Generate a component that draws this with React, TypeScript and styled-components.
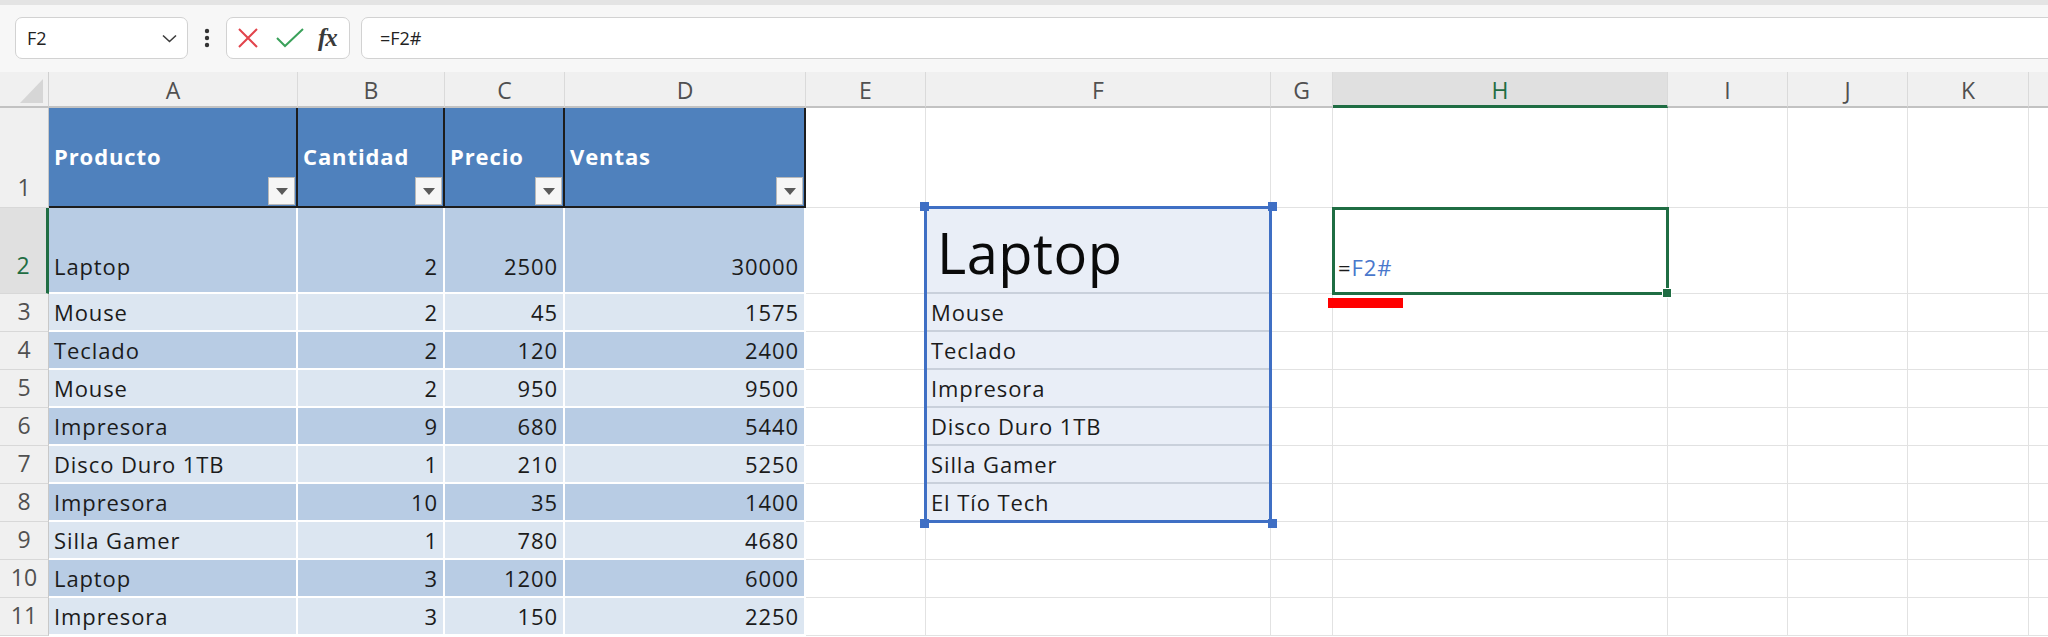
import React from "react";
import styled, { createGlobalStyle } from "styled-components";

const GlobalStyle = createGlobalStyle`
  html, body { margin: 0; padding: 0; background: #fff; }
  body { font-family: "Open Sans", "Noto Sans", sans-serif; }
`;

const Window = styled.div`
  width: 2048px;
  height: 637px;
  overflow: hidden;
  background: #fff;
  display: flex;
  flex-direction: column;
`;

/* ---------- formula bar ---------- */
const FormulaBar = styled.div`
  flex: 0 0 72px;
  box-sizing: border-box;
  border-top: 5px solid #e4e4e4;
  background: #f7f7f7;
  display: flex;
  align-items: flex-start;
  padding: 12px 0 0 15px;
`;

const Box = styled.div`
  box-sizing: border-box;
  height: 42px;
  background: #fff;
  border: 1px solid #d2d2d2;
  border-radius: 7px;
  display: flex;
  align-items: center;
`;

const NameBox = styled(Box)`
  width: 173px;
  justify-content: space-between;
  padding: 0 10px 0 11px;
  font-size: 18px;
  color: #222;
`;

const MoreDots = styled.div`
  width: 38px;
  height: 42px;
  display: flex;
  align-items: center;
  justify-content: center;
`;

const FuncBox = styled(Box)`
  width: 124px;
  padding-left: 10px;
  gap: 17px;
`;

const Fx = styled.span`
  font-family: "Liberation Serif", "DejaVu Serif", serif;
  font-style: italic;
  font-weight: 700;
  font-size: 25px;
  color: #3a3a3a;
  margin-left: -3px;
  letter-spacing: -1px;
`;

const FormulaInput = styled(Box)`
  flex: 1;
  margin-left: 11px;
  margin-right: -12px;
  padding-left: 18px;
  font-size: 18px;
  color: #222;
`;

/* ---------- sheet ---------- */
const Sheet = styled.div`
  flex: 1;
  display: grid;
  grid-template-columns: 49px 249px 147px 120px 241px 120px 345px 62px 335px 120px 120px 121px 120px;
  grid-template-rows: 36px 100px 86px repeat(9, 38px);
  font-size: 22px;
  color: #1b1b1b;
`;

const Corner = styled.div`
  position: relative;
  background: #f0f0f0;
  border-right: 1px solid #d0d0d0;
  border-bottom: 2px solid #c2c2c2;
  &::after {
    content: "";
    position: absolute;
    right: 5px;
    bottom: 3px;
    width: 23px;
    height: 24px;
    background: #d6d6d6;
    clip-path: polygon(100% 0, 100% 100%, 0 100%);
  }
`;

const ColHead = styled.div<{ $active?: boolean }>`
  display: flex;
  align-items: center;
  justify-content: center;
  font-size: 23px;
  color: ${(p) => (p.$active ? "#1f6d43" : "#505050")};
  background: ${(p) => (p.$active ? "#e0e0e0" : "#f0f0f0")};
  border-right: 1px solid #dadada;
  border-bottom: ${(p) => (p.$active ? "3px solid #1f6d43" : "2px solid #c2c2c2")};
  padding-top: 2px;
`;

const RowHead = styled.div<{ $active?: boolean }>`
  display: flex;
  align-items: flex-end;
  justify-content: center;
  padding-bottom: ${(p) => (p.$active ? 12 : 4)}px;
  font-size: 23px;
  color: ${(p) => (p.$active ? "#1f6d43" : "#505050")};
  background: ${(p) => (p.$active ? "#e0e0e0" : "#f0f0f0")};
  border-right: ${(p) => (p.$active ? "3px solid #1f6d43" : "1px solid #c8c8c8")};
  border-bottom: 1px solid #d8d8d8;
`;

const HeadCell = styled.div`
  position: relative;
  display: flex;
  align-items: center;
  padding: 0 0 2px 5px;
  background: #4f81bd;
  color: #fff;
  font-weight: 700;
  letter-spacing: 0.9px;
  border-right: 2px solid #1d1d1d;
  border-bottom: 2px solid #1d1d1d;
`;

const FilterButton = styled.span`
  position: absolute;
  right: 1px;
  bottom: 1px;
  width: 27px;
  height: 28px;
  box-sizing: border-box;
  background: #f6f6f6;
  border: 1px solid #b9b9b9;
  display: flex;
  align-items: center;
  justify-content: center;
`;

type Band = "dark" | "light" | undefined;

const Cell = styled.div<{ $band?: Band; $num?: boolean; $tall?: boolean }>`
  display: flex;
  align-items: flex-end;
  justify-content: ${(p) => (p.$num ? "flex-end" : "flex-start")};
  padding: 0 ${(p) => (p.$num ? 5 : 0)}px ${(p) => (p.$tall ? 11 : 3)}px ${(p) => (p.$num ? 0 : 5)}px;
  background: ${(p) =>
    p.$band === "dark" ? "#b8cce4" : p.$band === "light" ? "#dce6f1" : "#fff"};
  border-right: ${(p) => (p.$band ? "2px solid #fff" : "1px solid #e2e2e2")};
  border-bottom: ${(p) => (p.$band ? "2px solid #fff" : "1px solid #e2e2e2")};
  letter-spacing: 0.9px;
  white-space: nowrap;
  min-width: 0;
`;

const ActiveCell = styled(Cell)`
  position: relative;
  &::after {
    content: "";
    position: absolute;
    inset: -1px -2px -2px -1px;
    border: 3px solid #1f6d43;
    pointer-events: none;
  }
`;

const Ref = styled.span`
  color: #4a78cc;
`;

const FillHandle = styled.span`
  position: absolute;
  right: -5px;
  bottom: -5px;
  width: 8px;
  height: 8px;
  background: #1f6d43;
  border: 1px solid #fff;
  z-index: 2;
`;

const RedMark = styled.span`
  position: absolute;
  left: -5px;
  top: calc(100% + 5px);
  width: 75px;
  height: 10px;
  background: #ff0000;
  z-index: 2;
`;

const Spill = styled.div`
  grid-column: 7;
  grid-row: 3 / span 7;
  position: relative;
  display: flex;
  flex-direction: column;
  background: #e9eef7;
  &::after {
    content: "";
    position: absolute;
    inset: -2px -1px -1px -2px;
    border: 3px solid #3f6fc4;
    pointer-events: none;
  }
`;

const SpillCell = styled.div<{ $big?: boolean }>`
  flex: 0 0 ${(p) => (p.$big ? 86 : 38)}px;
  box-sizing: border-box;
  display: flex;
  align-items: flex-end;
  padding: 0 0 ${(p) => (p.$big ? 3 : 3)}px ${(p) => (p.$big ? 11 : 5)}px;
  font-size: ${(p) => (p.$big ? 56 : 22)}px;
  line-height: 1.3;
  letter-spacing: ${(p) => (p.$big ? 0.5 : 0.9)}px;
  color: ${(p) => (p.$big ? "#0a0a0a" : "inherit")};
  border-bottom: 2px solid #c9d0db;
  &:last-child { border-bottom: none; }
`;

const Handle = styled.span<{ $x: "left" | "right"; $y: "top" | "bottom" }>`
  position: absolute;
  ${(p) => p.$x}: -6px;
  ${(p) => p.$y}: -6px;
  width: 9px;
  height: 9px;
  background: #3f6fc4;
  z-index: 3;
`;

/* ---------- icons ---------- */
const Chevron = () => (
  <svg width="15" height="9" viewBox="0 0 15 9">
    <path d="M1 1.5 L7.5 7.5 L14 1.5" fill="none" stroke="#3c3c3c" strokeWidth="1.6" />
  </svg>
);

const Dots = () => (
  <svg width="6" height="20" viewBox="0 0 6 20">
    <circle cx="3" cy="3" r="2.2" fill="#333" />
    <circle cx="3" cy="10" r="2.2" fill="#333" />
    <circle cx="3" cy="17" r="2.2" fill="#333" />
  </svg>
);

const CancelIcon = () => (
  <svg width="22" height="22" viewBox="0 0 22 22">
    <path d="M2 2 L20 20 M20 2 L2 20" stroke="#e2444c" strokeWidth="2" />
  </svg>
);

const CheckIcon = () => (
  <svg width="28" height="20" viewBox="0 0 28 20">
    <path d="M1 10 L9 18 L27 1" fill="none" stroke="#3aa15a" strokeWidth="2" />
  </svg>
);

const DropArrow = () => (
  <svg width="12" height="7" viewBox="0 0 12 7">
    <path d="M0 0 H12 L6 7 Z" fill="#5a5a5a" />
  </svg>
);

/* ---------- data ---------- */
// L is only a sliver at the right edge, its letter is off screen
const columns = ["A", "B", "C", "D", "E", "F", "G", "H", "I", "J", "K", ""];
const headers = ["Producto", "Cantidad", "Precio", "Ventas"];
const data: [string, number, number, number][] = [
  ["Laptop", 2, 2500, 30000],
  ["Mouse", 2, 45, 1575],
  ["Teclado", 2, 120, 2400],
  ["Mouse", 2, 950, 9500],
  ["Impresora", 9, 680, 5440],
  ["Disco Duro 1TB", 1, 210, 5250],
  ["Impresora", 10, 35, 1400],
  ["Silla Gamer", 1, 780, 4680],
  ["Laptop", 3, 1200, 6000],
  ["Impresora", 3, 150, 2250],
];
const spilled = ["Laptop", "Mouse", "Teclado", "Impresora", "Disco Duro 1TB", "Silla Gamer", "El Tío Tech"];

const App = () => {
  const body: React.ReactNode[] = [];

  data.forEach((row, i) => {
    const r = i + 2;
    const band: Band = r % 2 === 0 ? "dark" : "light";
    const tall = r === 2;
    body.push(
      <RowHead key={`rh${r}`} $active={r === 2}>
        {r}
      </RowHead>
    );
    body.push(
      <Cell key={`a${r}`} $band={band} $tall={tall}>
        {row[0]}
      </Cell>
    );
    row.slice(1).forEach((v, j) => {
      body.push(
        <Cell key={`n${r}-${j}`} $band={band} $num $tall={tall}>
          {v}
        </Cell>
      );
    });
    body.push(<Cell key={`e${r}`} />);
    if (r === 2) {
      body.push(
        <Spill key="spill">
          {spilled.map((s, n) => (
            <SpillCell key={n} $big={n === 0}>
              {s}
            </SpillCell>
          ))}
          <Handle $x="left" $y="top" />
          <Handle $x="right" $y="top" />
          <Handle $x="left" $y="bottom" />
          <Handle $x="right" $y="bottom" />
        </Spill>
      );
    } else if (r > 8) {
      body.push(<Cell key={`f${r}`} />);
    }
    body.push(<Cell key={`g${r}`} />);
    if (r === 2) {
      body.push(
        <ActiveCell key="h2" $tall>
          =<Ref>F2#</Ref>
          <FillHandle />
          <RedMark />
        </ActiveCell>
      );
    } else {
      body.push(<Cell key={`h${r}`} />);
    }
    ["i", "j", "k", "l"].forEach((c) => body.push(<Cell key={`${c}${r}`} />));
  });

  return (
    <Window>
      <GlobalStyle />
      <FormulaBar>
        <NameBox>
          <span>F2</span>
          <Chevron />
        </NameBox>
        <MoreDots>
          <Dots />
        </MoreDots>
        <FuncBox>
          <CancelIcon />
          <CheckIcon />
          <Fx>fx</Fx>
        </FuncBox>
        <FormulaInput>=F2#</FormulaInput>
      </FormulaBar>

      <Sheet>
        <Corner />
        {columns.map((c, n) => (
          <ColHead key={n} $active={c === "H"}>
            {c}
          </ColHead>
        ))}

        <RowHead>1</RowHead>
        {headers.map((h) => (
          <HeadCell key={h}>
            {h}
            <FilterButton>
              <DropArrow />
            </FilterButton>
          </HeadCell>
        ))}
        {columns.slice(4).map((c, n) => (
          <Cell key={`r1${n}`} />
        ))}

        {body}
      </Sheet>
    </Window>
  );
};

export default App;
